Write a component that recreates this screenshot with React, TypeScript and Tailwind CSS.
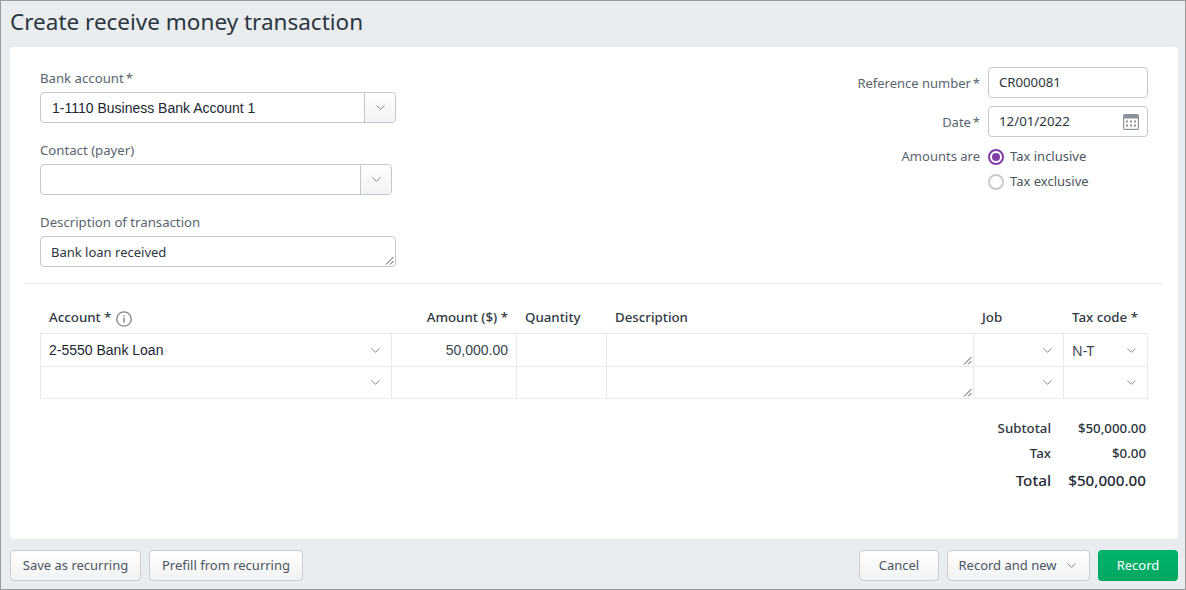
import { ChevronDown } from "lucide-react";

const columns = "grid grid-cols-[351px_125px_90px_367px_90px_85px] w-[1108px]";
const noto = "font-['Noto_Sans',sans-serif]";
const arial = "font-['Liberation_Sans',Arial,sans-serif]";

function Chevron({ className = "" }: { className?: string }) {
  return <ChevronDown className={`h-[15px] w-[15px] text-[#82888f] ${className}`} strokeWidth={1.6} />;
}

function Star() {
  return <span className="ml-[-1.5px]">*</span>;
}

function Combo({ value, width }: { value: string; width: string }) {
  return (
    <div className={`flex h-[31px] ${width} rounded-[4px] border border-[#c4c8cd] bg-white`}>
      <div className={`flex-1 pl-[11px] text-[14px] leading-[31px] text-[#1b2733] ${arial}`}>{value}</div>
      <div className="flex w-[31px] items-center justify-center rounded-r-[4px] border-l border-[#c4c8cd] bg-gradient-to-b from-white to-[#f1f2f3]">
        <Chevron />
      </div>
    </div>
  );
}

function CalendarIcon() {
  return (
    <svg width="16" height="16" viewBox="0 0 16 16" className="text-[#8b9299]">
      <path fill="currentColor" d="M2 0h12a2 2 0 0 1 2 2v12a2 2 0 0 1-2 2H2a2 2 0 0 1-2-2V2a2 2 0 0 1 2-2z" />
      <rect x="1.2" y="4.5" width="13.6" height="10.3" fill="#fff" />
      <g fill="currentColor">
        <rect x="3" y="6.5" width="2" height="2" />
        <rect x="7" y="6.5" width="2" height="2" />
        <rect x="11" y="6.5" width="2" height="2" />
        <rect x="3" y="10.5" width="2" height="2" />
        <rect x="7" y="10.5" width="2" height="2" />
        <rect x="11" y="10.5" width="2" height="2" />
      </g>
    </svg>
  );
}

function InfoIcon() {
  return (
    <svg width="16" height="16" viewBox="0 0 16 16" fill="none" className="text-[#7d848b]">
      <circle cx="8" cy="8" r="7.2" stroke="currentColor" strokeWidth="1.3" />
      <rect x="7.3" y="7" width="1.4" height="4.5" fill="currentColor" />
      <rect x="7.3" y="4.3" width="1.4" height="1.5" fill="currentColor" />
    </svg>
  );
}

function Grip() {
  return (
    <svg width="9" height="9" viewBox="0 0 9 9" className="absolute bottom-[1px] right-[1px] text-[#555]">
      <path d="M1 8.5 8.5 1M5 8.5 8.5 5" stroke="currentColor" strokeWidth="1" fill="none" />
    </svg>
  );
}

function Radio({ checked, label }: { checked?: boolean; label: string }) {
  return (
    <div className="flex h-[25px] items-center gap-[6px]">
      <span
        className={`flex h-[16px] w-[16px] items-center justify-center rounded-full border-2 bg-white ${
          checked ? "border-[#7f3fa5]" : "border-[#c6c9cd]"
        }`}
      >
        {checked && <span className="h-[8px] w-[8px] rounded-full bg-[#7f3fa5]" />}
      </span>
      <span className="text-[13px] text-[#4b5560]">{label}</span>
    </div>
  );
}

function Button({ children, className = "" }: { children: React.ReactNode; className?: string }) {
  return (
    <div
      className={`flex h-[31px] items-center justify-center rounded-[4px] border border-[#c9ccd0] bg-gradient-to-b from-white to-[#f1f2f3] text-[13px] text-[#4a5561] ${className}`}
    >
      {children}
    </div>
  );
}

function Row({ account, amount, tax, last }: { account?: string; amount?: string; tax?: string; last?: boolean }) {
  const cell = "relative flex items-center border-l border-[#e8e9eb]";
  return (
    <div className={`${columns} ${last ? "h-[33px] border-b" : "h-[33px]"} border-t border-[#e8e9eb]`}>
      <div className={`${cell} justify-between pl-[8px] pr-[8px] text-[14px] text-[#1b2733] ${arial}`}>
        <span>{account}</span>
        <Chevron />
      </div>
      <div className={`${cell} justify-end pr-[8px] text-[14px] text-[#39434d] ${arial}`}>{amount}</div>
      <div className={cell} />
      <div className={cell}>
        <Grip />
      </div>
      <div className={`${cell} justify-end pr-[8px]`}>
        <Chevron />
      </div>
      <div className={`${cell} justify-between border-r pl-[8px] pr-[8px] text-[14px] text-[#39434d]`}>
        <span>{tax}</span>
        <Chevron />
      </div>
    </div>
  );
}

function Total({ label, value, big }: { label: string; value: string; big?: boolean }) {
  return (
    <div className={`flex items-center justify-end font-medium ${big ? "h-[28px] text-[15.2px] text-[#1f2a35]" : "h-[25px] text-[13.3px] text-[#2a343e]"}`}>
      <span>{label}</span>
      <span className="w-[95px] text-right">{value}</span>
    </div>
  );
}

export default function App() {
  const label = "h-[20px] text-[13.2px] text-[#5a646e]";
  return (
    <div className={`flex h-[590px] w-[1186px] flex-col border border-[#9b9b9b] bg-[#e9edf0] ${noto}`}>
      <h1 className="h-[46px] pl-[9px] pt-[5px] text-[22.5px] leading-[32px] text-[#2b3640]">Create receive money transaction</h1>

      <div className="ml-[9px] mr-[7px] h-[492px] rounded-[4px] bg-white px-[15px] pt-[20px]">
        <div className="flex h-[217px] justify-between border-b border-[#e8e9eb] pl-[15px] pr-[15px]">
          <div className="flex flex-col">
            <label className={`mb-[5px] leading-[22px] ${label}`}>Bank account <Star /></label>
            <Combo value="1-1110 Business Bank Account 1" width="w-[356px]" />
            <label className={`mb-[5px] mt-[16px] leading-[22px] ${label}`}>Contact (payer)</label>
            <Combo value="" width="w-[352px]" />
            <label className={`mb-[4px] mt-[17px] leading-[20px] ${label}`}>Description of transaction</label>
            <div className="relative h-[31px] w-[356px] rounded-[4px] border border-[#c4c8cd] pl-[10px] text-[13px] leading-[31px] text-[#2b3640]">
              Bank loan received
              <Grip />
            </div>
          </div>

          <div className="flex w-[320px] flex-col">
            <div className="flex h-[31px] items-center justify-end gap-[8px]">
              <span className="pt-[2px] text-[13px] text-[#5a646e]">Reference number <Star /></span>
              <div className="h-[31px] w-[160px] rounded-[4px] border border-[#c4c8cd] pl-[10px] text-[13.2px] leading-[29px] text-[#2b3640]">CR000081</div>
            </div>
            <div className="mt-[8px] flex h-[31px] items-center justify-end gap-[8px]">
              <span className="pt-[2px] text-[13px] text-[#5a646e]">Date <Star /></span>
              <div className="flex h-[31px] w-[160px] items-center justify-between rounded-[4px] border border-[#c4c8cd] pl-[10px] pr-[8px] text-[13.3px] text-[#2b3640]">
                12/01/2022
                <CalendarIcon />
              </div>
            </div>
            <div className="mt-[7px] flex justify-end gap-[8px]">
              <span className="h-[25px] text-[13px] leading-[25px] text-[#5a646e]">Amounts are</span>
              <div className="w-[160px]">
                <Radio checked label="Tax inclusive" />
                <Radio label="Tax exclusive" />
              </div>
            </div>
          </div>
        </div>

        <div className="mx-[15px] mt-[17px]">
          <div className={`${columns} h-[32px] text-[13.3px] font-medium text-[#2f3943]`}>
            <div className="flex items-start gap-[5px] pl-[9px] pt-[7px]">
              <span>Account *</span>
              <span className="mt-[3px]">
                <InfoIcon />
              </span>
            </div>
            <div className="pr-[8px] pt-[7px] text-right">Amount ($) *</div>
            <div className="pl-[9px] pt-[7px]">Quantity</div>
            <div className="pl-[9px] pt-[7px]">Description</div>
            <div className="pl-[9px] pt-[7px]">Job</div>
            <div className="pl-[9px] pt-[7px]">Tax code *</div>
          </div>
          <Row account="2-5550 Bank Loan" amount="50,000.00" tax="N-T" />
          <Row last />
          <div className="mt-[17px] pr-[2px]">
            <Total label="Subtotal" value="$50,000.00" />
            <Total label="Tax" value="$0.00" />
            <Total big label="Total" value="$50,000.00" />
          </div>
        </div>
      </div>

      <div className="ml-[9px] mr-[7px] mt-[11px] flex justify-between">
        <div className="flex gap-[8px]">
          <Button className="w-[131px]">Save as recurring</Button>
          <Button className="w-[154px]">Prefill from recurring</Button>
        </div>
        <div className="flex gap-[8px]">
          <Button className="w-[80px]">Cancel</Button>
          <Button className="w-[143px] gap-[7px]">
            Record and new
            <Chevron />
          </Button>
          <div className="flex h-[31px] w-[80px] items-center justify-center rounded-[4px] bg-gradient-to-b from-[#00b36b] to-[#00a862] text-[13px] text-white">Record</div>
        </div>
      </div>
    </div>
  );
}
